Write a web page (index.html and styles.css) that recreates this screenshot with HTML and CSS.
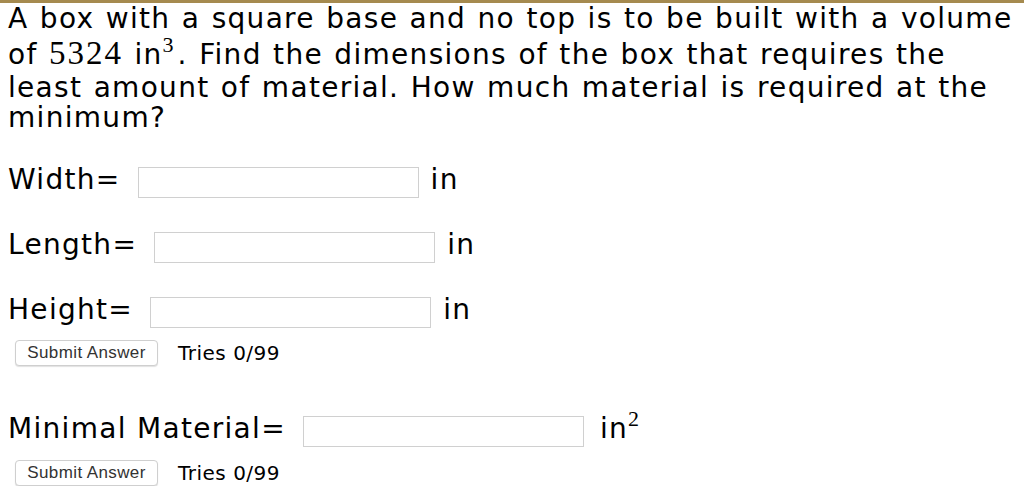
FILE: index.html
```html
<!DOCTYPE html>
<html>
<head>
<meta charset="utf-8">
<link rel="stylesheet" href="styles.css">
</head>
<body>
<div class="page">
  <p class="question">A box with a square base and no top is to be built with a volume of <span class="math">5324</span> in<sup class="msup msup-cube">3</sup>. Find the dimensions of the box that requires the least amount of material. How much material is required at the minimum?</p>

  <div class="row row-first">
    <span class="label">Width=</span>
    <input class="answer" type="text">
    <span class="unit">in</span>
  </div>
  <div class="row">
    <span class="label">Length=</span>
    <input class="answer" type="text">
    <span class="unit">in</span>
  </div>
  <div class="row">
    <span class="label">Height=</span>
    <input class="answer" type="text">
    <span class="unit">in</span>
  </div>
  <div class="submit-row">
    <button class="submit" type="button">Submit Answer</button>
    <span class="tries">Tries 0/99</span>
  </div>

  <div class="row row-material">
    <span class="label">Minimal Material=</span>
    <input class="answer" type="text">
    <span class="unit unit-sq">in<sup class="msup">2</sup></span>
  </div>
  <div class="submit-row">
    <button class="submit" type="button">Submit Answer</button>
    <span class="tries">Tries 0/99</span>
  </div>
</div>
</body>
</html>
```

FILE: styles.css
```css
html, body {
  margin: 0;
  padding: 0;
  background: #ffffff;
}

body {
  border-top: 3px solid #a58a4f;
  font-family: "DejaVu Sans", Verdana, sans-serif;
  color: #000000;
}

.page {
  padding: 0 0 0 8px;
}

.question {
  margin: 0;
  padding-top: 1px;
  font-size: 28px;
  line-height: 30px;
  letter-spacing: 1.3px;
  word-spacing: 1.2px;
}

.math {
  display: inline-block;
  font-family: "Liberation Serif", "Times New Roman", serif;
  font-size: 33px;
  line-height: 27px;
  letter-spacing: 2px;
  padding: 6px 0;
}

.msup {
  font-family: "Liberation Serif", "Times New Roman", serif;
  font-size: 22px;
  line-height: 0;
  vertical-align: 12px;
  letter-spacing: 0;
}

.msup-cube {
  margin-right: 4px;
}

.row {
  display: flex;
  align-items: flex-start;
  font-size: 28px;
  letter-spacing: 1.3px;
  margin-top: 34px;
  height: 31px;
}

.row-first {
  margin-top: 34px;
}

.row-material {
  margin-top: 50px;
}

.label {
  white-space: nowrap;
  line-height: 25px;
}

.answer {
  width: 281px;
  height: 31px;
  box-sizing: border-box;
  border: 1px solid #d0d0d0;
  margin: 0 12px 0 17px;
  padding: 2px 4px;
  font-size: 18px;
  background: #ffffff;
}

.unit {
  white-space: nowrap;
  line-height: 25px;
}

.unit-sq {
  margin-left: 4px;
}

.submit-row {
  display: flex;
  align-items: center;
  margin-top: 12px;
  padding-left: 7px;
}

.row-material + .submit-row {
  margin-top: 13px;
}

.submit {
  font-family: "Liberation Sans", Arial, Helvetica, sans-serif;
  font-size: 17px;
  letter-spacing: 0.4px;
  color: #333333;
  background: #ffffff;
  border: 1px solid #cfcfcf;
  border-radius: 4px;
  box-shadow: 0 1px 1px rgba(0, 0, 0, 0.12);
  height: 26px;
  width: 143px;
  padding: 0;
}

.tries {
  font-size: 20px;
  letter-spacing: 0.5px;
  margin-left: 20px;
}
```
